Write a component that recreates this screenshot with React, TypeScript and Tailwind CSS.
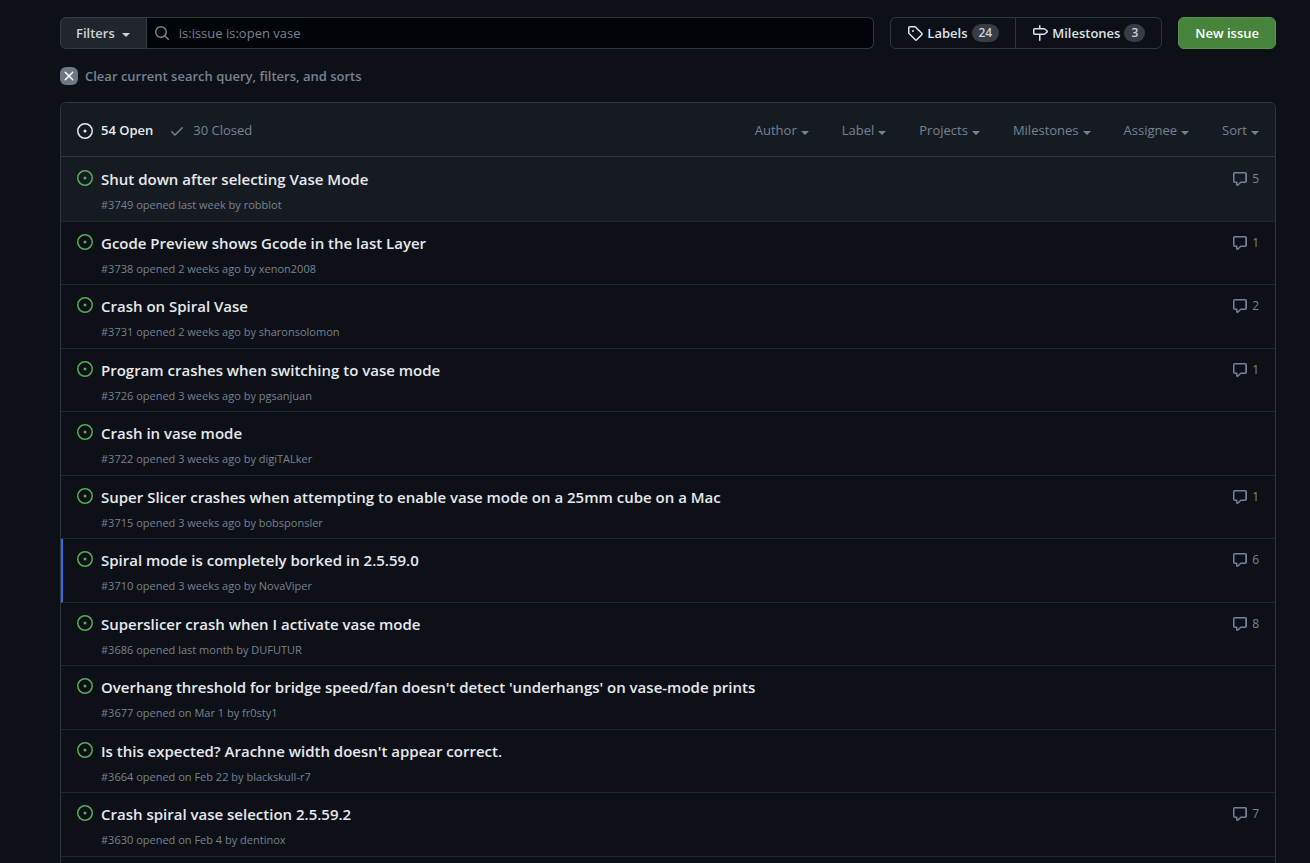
import type { ReactNode } from "react";

type IconProps = { className?: string; d: string };

const PATHS = {
  opened:
    "M8 9.5a1.5 1.5 0 1 0 0-3 1.5 1.5 0 0 0 0 3ZM8 0a8 8 0 1 1 0 16A8 8 0 0 1 8 0ZM1.5 8a6.5 6.5 0 1 0 13 0 6.5 6.5 0 0 0-13 0Z",
  tag: "M1 7.775V2.75C1 1.784 1.784 1 2.75 1h5.025c.464 0 .91.184 1.238.513l6.25 6.25a1.75 1.75 0 0 1 0 2.474l-5.026 5.026a1.75 1.75 0 0 1-2.474 0l-6.25-6.25A1.752 1.752 0 0 1 1 7.775Zm1.5 0c0 .066.026.13.073.177l6.25 6.25a.25.25 0 0 0 .354 0l5.025-5.025a.25.25 0 0 0 0-.354l-6.25-6.25a.25.25 0 0 0-.177-.073H2.75a.25.25 0 0 0-.25.25ZM6 5a1 1 0 1 1 0 2 1 1 0 0 1 0-2Z",
  milestone:
    "M7.75 0a.75.75 0 0 1 .75.75V3h3.634c.414 0 .814.147 1.13.414l2.07 1.75a1.75 1.75 0 0 1 0 2.672l-2.07 1.75a1.75 1.75 0 0 1-1.13.414H8.5v5.25a.75.75 0 0 1-1.5 0V10H2.75A1.75 1.75 0 0 1 1 8.25v-3.5C1 3.784 1.784 3 2.75 3H7V.75A.75.75 0 0 1 7.75 0Zm4.384 8.5a.25.25 0 0 0 .161-.06l2.07-1.75a.248.248 0 0 0 0-.38l-2.07-1.75a.25.25 0 0 0-.161-.06H2.75a.25.25 0 0 0-.25.25v3.5c0 .138.112.25.25.25h9.384Z",
  comment:
    "M1 2.75C1 1.784 1.784 1 2.75 1h10.5c.966 0 1.75.784 1.75 1.75v7.5A1.75 1.75 0 0 1 13.25 12H9.06l-2.573 2.573A1.458 1.458 0 0 1 4 13.543V12H2.75A1.75 1.75 0 0 1 1 10.25Zm1.75-.25a.25.25 0 0 0-.25.25v7.5c0 .138.112.25.25.25h2a.75.75 0 0 1 .75.75v2.19l2.72-2.72a.749.749 0 0 1 .53-.22h4.25a.25.25 0 0 0 .25-.25v-7.5a.25.25 0 0 0-.25-.25Z",
  search:
    "M10.68 11.74a6 6 0 0 1-7.922-8.982 6 6 0 0 1 8.982 7.922l3.04 3.04a.749.749 0 0 1-.326 1.275.749.749 0 0 1-.734-.215ZM11.5 7a4.499 4.499 0 1 0-8.997 0A4.499 4.499 0 0 0 11.5 7Z",
  check:
    "M13.78 4.22a.75.75 0 0 1 0 1.06l-7.25 7.25a.75.75 0 0 1-1.06 0L2.22 9.28a.751.751 0 0 1 .018-1.042.751.751 0 0 1 1.042-.018L6 10.94l6.72-6.72a.75.75 0 0 1 1.06 0Z",
  x: "M3.72 3.72a.75.75 0 0 1 1.06 0L8 6.94l3.22-3.22a.749.749 0 0 1 1.275.326.749.749 0 0 1-.215.734L9.06 8l3.22 3.22a.749.749 0 0 1-.326 1.275.749.749 0 0 1-.734-.215L8 9.06l-3.22 3.22a.751.751 0 0 1-1.042-.018.751.751 0 0 1-.018-1.042L6.94 8 3.72 4.78a.75.75 0 0 1 0-1.06Z",
};

function Icon({ className = "", d }: IconProps) {
  return (
    <svg viewBox="0 0 16 16" aria-hidden="true" className={`size-4 shrink-0 fill-current ${className}`}>
      <path fillRule="evenodd" d={d} />
    </svg>
  );
}

function Caret() {
  return (
    <svg viewBox="0 0 8 4" aria-hidden="true" className="mt-1 h-1 w-2 shrink-0 fill-current">
      <path d="M0 0h8L4 4Z" />
    </svg>
  );
}

function Counter({ children }: { children: ReactNode }) {
  return (
    <span className="rounded-full bg-[#373c45] px-[7px] text-xs leading-[18px] text-[#cdd3da]">{children}</span>
  );
}

type Issue = {
  id: number;
  title: string;
  when: string;
  author: string;
  comments?: number;
  hovered?: boolean;
  focused?: boolean;
};

const ISSUES: Issue[] = [
  { id: 3749, title: "Shut down after selecting Vase Mode", when: "last week", author: "robblot", comments: 5, hovered: true },
  { id: 3738, title: "Gcode Preview shows Gcode in the last Layer", when: "2 weeks ago", author: "xenon2008", comments: 1 },
  { id: 3731, title: "Crash on Spiral Vase", when: "2 weeks ago", author: "sharonsolomon", comments: 2 },
  { id: 3726, title: "Program crashes when switching to vase mode", when: "3 weeks ago", author: "pgsanjuan", comments: 1 },
  { id: 3722, title: "Crash in vase mode", when: "3 weeks ago", author: "digiTALker" },
  { id: 3715, title: "Super Slicer crashes when attempting to enable vase mode on a 25mm cube on a Mac", when: "3 weeks ago", author: "bobsponsler", comments: 1 },
  { id: 3710, title: "Spiral mode is completely borked in 2.5.59.0", when: "3 weeks ago", author: "NovaViper", comments: 6, focused: true },
  { id: 3686, title: "Superslicer crash when I activate vase mode", when: "last month", author: "DUFUTUR", comments: 8 },
  { id: 3677, title: "Overhang threshold for bridge speed/fan doesn't detect 'underhangs' on vase-mode prints", when: "on Mar 1", author: "fr0sty1" },
  { id: 3664, title: "Is this expected? Arachne width doesn't appear correct.", when: "on Feb 22", author: "blackskull-r7" },
  { id: 3630, title: "Crash spiral vase selection 2.5.59.2", when: "on Feb 4", author: "dentinox", comments: 7 },
];

const MENUS = ["Author", "Label", "Projects", "Milestones", "Assignee", "Sort"];

function IssueRow({ issue }: { issue: Issue }) {
  return (
    <li
      className={`flex items-start border-b border-b-[#21262d] pr-4 odd:min-h-16 even:min-h-[63px] ${
        issue.hovered ? "bg-[#161b22]" : ""
      } ${issue.focused ? "border-l-2 border-l-[#316dea] pl-[14px]" : "pl-4"}`}
    >
      <Icon d={PATHS.opened} className="mt-3 text-[#57ab5a]" />
      <div className="min-w-0 flex-1 pt-[9px] pl-2">
        <a href={`#issue-${issue.id}`} className="block text-[15px] leading-6 font-semibold text-[#e6e9ed]">
          {issue.title}
        </a>
        <p className="mt-[5px] text-[11px] leading-[18px] text-[#768390]">
          #{issue.id} opened {issue.when} by <a href={`#${issue.author}`}>{issue.author}</a>
        </p>
      </div>
      {issue.comments !== undefined && (
        <a
          href={`#comments-${issue.id}`}
          aria-label={`${issue.comments} comments`}
          className="mt-[13px] flex items-center gap-1 text-xs leading-4 text-[#768390]"
        >
          <Icon d={PATHS.comment} />
          {issue.comments}
        </a>
      )}
    </li>
  );
}

export default function App() {
  return (
    <main className="flex h-screen flex-col overflow-hidden bg-[#0d1117] pt-[17px] pr-[34px] pl-[60px] font-['Open_Sans','Noto_Sans',sans-serif] text-sm text-[#768390]">
      <div className="flex h-8 shrink-0">
        <form className="flex min-w-0 flex-1" role="search" onSubmit={(e) => e.preventDefault()}>
          <button
            type="button"
            className="flex items-center gap-[7px] rounded-l-md border border-[#373c44] bg-[#21262d] pr-4 pl-[15px] text-[13px] font-semibold text-[#cdd3da]"
          >
            Filters
            <Caret />
          </button>
          <div className="flex min-w-0 flex-1 items-center gap-2 rounded-r-md border border-l-0 border-[#30363d] bg-[#010409] pl-[7px]">
            <Icon d={PATHS.search} />
            <input
              type="text"
              aria-label="Search all issues"
              defaultValue="is:issue is:open vase"
              className="min-w-0 flex-1 bg-transparent pl-px text-[13px] text-[#768390] outline-none"
            />
          </div>
        </form>
        <nav className="ml-4 flex rounded-md border border-[#30363d] text-[13px] font-semibold text-[#dde2e8]">
          <a href="#labels" className="flex items-center gap-1 border-r border-[#30363d] px-4">
            <Icon d={PATHS.tag} />
            Labels
            <Counter>24</Counter>
          </a>
          <a href="#milestones" className="flex items-center gap-1 px-4">
            <Icon d={PATHS.milestone} />
            Milestones
            <Counter>3</Counter>
          </a>
        </nav>
        <button
          type="button"
          className="ml-4 rounded-md border border-[#57934f] bg-[#46833b] px-4 text-[13px] font-semibold text-white"
        >
          New issue
        </button>
      </div>

      <a href="#clear" className="mt-4 flex h-[22px] shrink-0 items-center gap-[7px] self-start text-[13px] font-semibold">
        <span className="flex size-[18px] items-center justify-center rounded-md bg-[#6e7681] text-white">
          <Icon d={PATHS.x} />
        </span>
        Clear current search query, filters, and sorts
      </a>

      <section className="mt-[15px] min-h-0 flex-1 overflow-hidden rounded-t-md border border-b-0 border-[#30363d]">
        <header className="flex h-[54px] items-center border-b border-[#30363d] bg-[#161b22] px-4 pt-[2px] text-[13px]">
          <a href="#open" className="flex items-center gap-2 font-semibold text-[#e6e9ed]">
            <Icon d={PATHS.opened} />
            54 Open
          </a>
          <a href="#closed" className="ml-4 flex items-center gap-2">
            <Icon d={PATHS.check} />
            30 Closed
          </a>
          <div className="ml-auto flex gap-[33px]">
            {MENUS.map((label) => (
              <button key={label} type="button" className="flex items-center gap-1">
                {label}
                <Caret />
              </button>
            ))}
          </div>
        </header>
        <ul className="border-t border-t-[#161b22]">
          {ISSUES.map((issue) => (
            <IssueRow key={issue.id} issue={issue} />
          ))}
        </ul>
      </section>
    </main>
  );
}
